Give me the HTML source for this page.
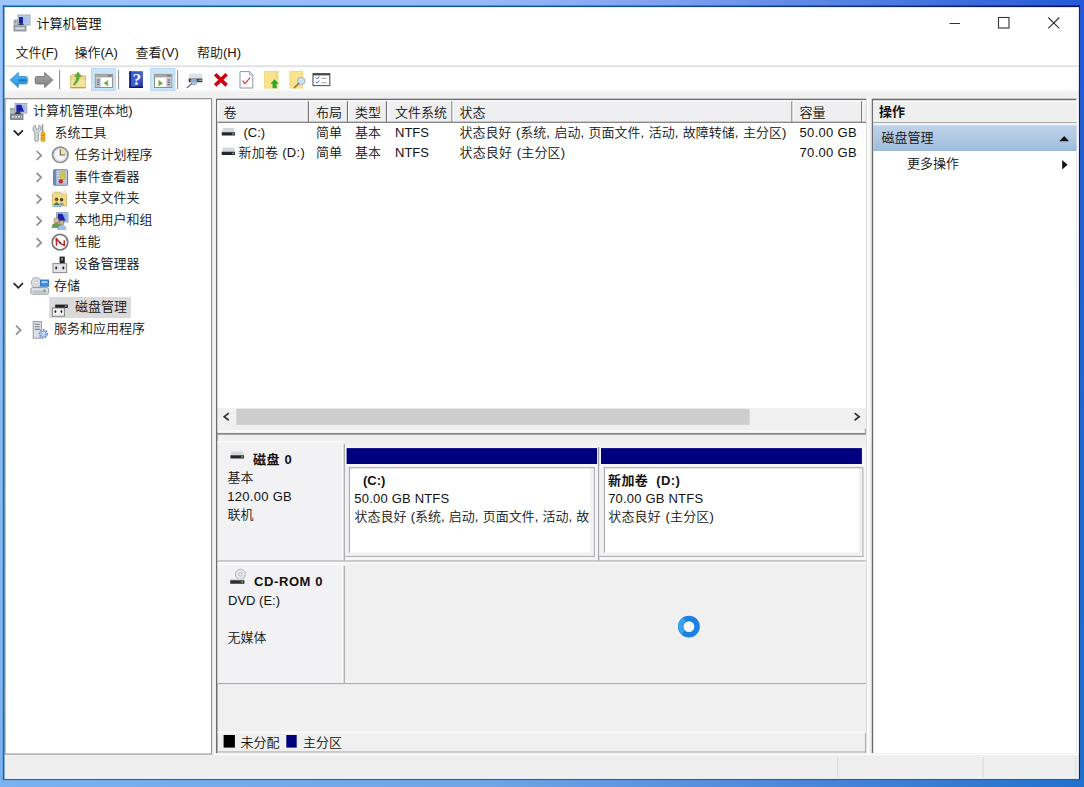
<!DOCTYPE html>
<html lang="zh-CN">
<head>
<meta charset="utf-8">
<title>计算机管理</title>
<style>
html,body{margin:0;padding:0;}
body{width:1084px;height:787px;overflow:hidden;position:relative;
 font-family:"Liberation Sans","Noto Sans CJK SC",sans-serif;font-size:13px;color:#111;font-weight:350;
 background:linear-gradient(to right,#9cc5fd 0%,#96b9f8 45%,#7f9ff0 62%,#4f7fe2 80%,#2459d5 100%);}
.abs{position:absolute;}
#deskb{left:0;top:779px;width:1084px;height:8px;background:linear-gradient(to right,#7ab1ef 0%,#6fa4e6 45%,#4f88da 72%,#2171cd 100%);}
#deskl{left:0;top:0;width:4px;height:787px;background:linear-gradient(to bottom,#9cc5fd,#7ab1ef);}
#deskr{left:1079px;top:0;width:5px;height:787px;background:linear-gradient(to bottom,#2459d5,#1f6fcc);}
#win{left:4px;top:6px;width:1075px;height:773px;background:#fff;}
#page{left:0;top:0;width:1084px;height:787px;}
.t,.tr{position:absolute;white-space:nowrap;line-height:18px;height:18px;}
.b{font-weight:bold;}
.r1{top:124px}.r2{top:143.5px}
.h{top:103.5px}
</style>
</head>
<body>
<div id="deskl" class="abs"></div>
<div id="deskr" class="abs"></div>
<div id="deskb" class="abs"></div>
<div id="win" class="abs"></div>
<svg class="abs" style="left:0;top:0" width="1084" height="787" viewBox="0 0 1084 787" shape-rendering="geometricPrecision">
<defs><linearGradient id="tb" x1="0" y1="0" x2="1" y2="0"><stop offset="0" stop-color="#1662a8"/><stop offset=".6" stop-color="#12509f"/><stop offset="1" stop-color="#06087c"/></linearGradient><linearGradient id="bb" x1="0" y1="0" x2="1" y2="0"><stop offset="0" stop-color="#1a70ad"/><stop offset="1" stop-color="#1a5fb0"/></linearGradient><linearGradient id="band" x1="0" y1="0" x2="0" y2="1"><stop offset="0" stop-color="#bfd2e9"/><stop offset=".45" stop-color="#b1c9e4"/><stop offset="1" stop-color="#9dbbdc"/></linearGradient></defs>
<rect x="4.5" y="65.6" width="1074.5" height="1" fill="#cdcdcd"/>
<rect x="4.5" y="90.2" width="1074.5" height="688.8" fill="#f0f0f0"/>
<rect x="4.5" y="90.2" width="1074.5" height="1.8" fill="#f6f6f6"/>
<rect x="4.5" y="98.1" width="207.6" height="656.5" fill="#939393"/>
<rect x="5.6" y="99.3" width="205.4" height="654.2" fill="#ffffff"/>
<rect x="49.2" y="296.9" width="81.7" height="21.2" fill="#dadada"/>
<rect x="216" y="98.7" width="650.3" height="654.5" fill="#6c6c6c"/>
<rect x="217.5" y="100.4" width="648.8" height="652.8" fill="#f0f0f0"/>
<rect x="866.8" y="99" width="2.5" height="656" fill="#fcfcfc"/>
<rect x="217.5" y="100.4" width="648.5" height="307.9" fill="#ffffff"/>
<rect x="217.5" y="100.4" width="648.5" height="22.4" fill="#efeff1"/>
<rect x="217.5" y="100.4" width="648.5" height="1.2" fill="#fcfcfc"/>
<rect x="217.5" y="100.4" width="1.1" height="21.3" fill="#fcfcfc"/>
<rect x="307.9" y="101.2" width="1.1" height="20.6" fill="#707070"/>
<rect x="309" y="101.6" width="1.3" height="20" fill="#fcfcfc"/>
<rect x="346.9" y="101.2" width="1.1" height="20.6" fill="#707070"/>
<rect x="348" y="101.6" width="1.3" height="20" fill="#fcfcfc"/>
<rect x="385.9" y="101.2" width="1.1" height="20.6" fill="#707070"/>
<rect x="387" y="101.6" width="1.3" height="20" fill="#fcfcfc"/>
<rect x="451.4" y="101.2" width="1.1" height="20.6" fill="#707070"/>
<rect x="452.5" y="101.6" width="1.3" height="20" fill="#fcfcfc"/>
<rect x="791.4" y="101.2" width="1.1" height="20.6" fill="#707070"/>
<rect x="792.5" y="101.6" width="1.3" height="20" fill="#fcfcfc"/>
<rect x="861.1" y="101.2" width="1.1" height="20.6" fill="#707070"/>
<rect x="862.2" y="101.6" width="1.3" height="20" fill="#fcfcfc"/>
<rect x="217.5" y="121.7" width="648.5" height="1.1" fill="#6f6f6f"/>
<rect x="217.5" y="408.3" width="648.5" height="21.7" fill="#f0f0f0"/>
<rect x="236.3" y="408.8" width="513.3" height="16" fill="#cdcdcd"/>
<path d="M228.8 413.2 L224.2 416.8 L228.8 420.3" fill="none" stroke="#333" stroke-width="1.7"/>
<path d="M854.6 413.2 L859.2 416.8 L854.6 420.3" fill="none" stroke="#333" stroke-width="1.7"/>
<rect x="217.5" y="430.3" width="648.1" height="1.5" fill="#fbfbfb"/>
<rect x="217.5" y="433" width="648.3" height="1.7" fill="#858585"/>
<rect x="864.8" y="428.5" width="1" height="5.5" fill="#9c9c9c"/>
<rect x="217.5" y="441.3" width="127.3" height="119.7" fill="#f2f2f5"/>
<rect x="217.5" y="441.3" width="125.7" height="1.2" fill="#fcfcfc"/>
<rect x="341.9" y="442.3" width="1.5" height="117.7" fill="#fafafa"/>
<rect x="343.7" y="443.8" width="1.1" height="117.2" fill="#a0a0a0"/>
<rect x="345.3" y="446.3" width="520.7" height="114.2" fill="#f6f6f9"/>
<rect x="598" y="447" width="1.3" height="113.5" fill="#a2a2a8"/>
<rect x="346.6" y="448.1" width="250.5" height="15.9" fill="#00007f"/>
<rect x="601" y="448.1" width="260.9" height="15.9" fill="#00007f"/>
<rect x="345.3" y="466" width="249.6" height="90.9" fill="#f1f1f3"/>
<rect x="593.9" y="467.2" width="1" height="89.7" fill="#ababab"/>
<rect x="345.3" y="555.9" width="249.6" height="1" fill="#ababab"/>
<rect x="350" y="468.2" width="240.3" height="84.4" fill="#ffffff"/>
<rect x="348.9" y="467.2" width="1.1" height="85.4" fill="#ababab"/>
<rect x="348.9" y="467.2" width="245" height="1.1" fill="#ababab"/>
<rect x="599.3" y="466" width="264.1" height="90.9" fill="#f1f1f3"/>
<rect x="862.4" y="467.2" width="1" height="89.7" fill="#ababab"/>
<rect x="599.3" y="555.9" width="264.1" height="1" fill="#ababab"/>
<rect x="605" y="468.2" width="253.7" height="84.4" fill="#ffffff"/>
<rect x="603.9" y="467.2" width="1.1" height="85.4" fill="#ababab"/>
<rect x="603.9" y="467.2" width="258.5" height="1.1" fill="#ababab"/>
<rect x="217.5" y="560.4" width="648.3" height="1.1" fill="#ababab"/>
<rect x="217.5" y="562.3" width="648.3" height="1.2" fill="#fbfbfb"/>
<rect x="217.5" y="563.5" width="127.3" height="120" fill="#f2f2f5"/>
<rect x="217.5" y="563.5" width="125.7" height="1.2" fill="#fcfcfc"/>
<rect x="341.9" y="564.5" width="1.5" height="118" fill="#fafafa"/>
<rect x="343.7" y="566" width="1.1" height="117.5" fill="#a0a0a0"/>
<rect x="217.5" y="683" width="648.3" height="1.1" fill="#ababab"/>
<rect x="217.5" y="731.6" width="647.9" height="1.4" fill="#fcfcfc"/>
<rect x="217.5" y="751.4" width="648.4" height="1.1" fill="#b0b0b0"/>
<rect x="864.9" y="733" width="1" height="19.5" fill="#b0b0b0"/>
<rect x="223.6" y="735" width="11.3" height="12.6" fill="#000000"/>
<rect x="286.3" y="735" width="10.4" height="12.6" fill="#00007f"/>
<rect x="871.8" y="98.7" width="204.7" height="654.5" fill="#6c6c6c"/>
<rect x="873.2" y="100.6" width="203.3" height="652.6" fill="#ffffff"/>
<rect x="1076.5" y="98.7" width="2.5" height="656.3" fill="#fbfeff"/>
<rect x="873.2" y="100.6" width="203.3" height="21.5" fill="#f0eff0"/>
<rect x="873.2" y="100.6" width="203.3" height="1.3" fill="#fdfdfd"/>
<rect x="873.2" y="122.1" width="203.3" height="0.9" fill="#a0a0a0"/>
<rect x="873.2" y="123" width="203.3" height="2.2" fill="#eef3fa"/>
<rect x="873.2" y="125.2" width="203.4" height="25.8" fill="url(#band)"/>
<path d="M1059.4 141.2 L1064.2 136 L1069 141.2 Z" fill="#111"/>
<path d="M1062.2 160 L1067.6 164.8 L1062.2 169.6 Z" fill="#111"/>
<rect x="214" y="753.4" width="865" height="1.8" fill="#fdfdfd"/>
<rect x="4.5" y="755.2" width="1074.5" height="22.4" fill="#f0eff0"/>
<rect x="4.5" y="777.6" width="1074.5" height="1.3" fill="#f8f8f9"/>
<rect x="837.2" y="757" width="1.1" height="20" fill="#d9d9d9"/>
<rect x="982.5" y="757" width="1.1" height="20" fill="#d9d9d9"/>
<rect x="1075" y="757" width="1.3" height="20" fill="#e2e2e6"/>
<rect x="2.8" y="5.5" width="1.7" height="774.3" fill="#1467a9"/>
<rect x="2.8" y="5.5" width="1077" height="1.6" fill="url(#tb)"/>
<rect x="1078.9" y="5.5" width="1" height="774.3" fill="#081a80"/>
<rect x="2.8" y="778.9" width="1077" height="1.2" fill="url(#bb)"/>
</svg>
<div id="page" class="abs">
<!-- title bar -->
<svg class="abs" style="left:13px;top:14px" width="18" height="18" viewBox="0 0 18 18">
 <rect x="5" y="1" width="12" height="10" fill="#c9d3df" stroke="#9aa7b6" stroke-width="1"/>
 <rect x="6.5" y="2.5" width="9" height="7" fill="#a9c4f2"/>
 <rect x="6" y="3" width="4" height="6.5" fill="#1a22b0"/>
 <path d="M5 11 L9 8 L11 11 Z" fill="#2c3a55"/>
 <rect x="1" y="6" width="4" height="7" fill="#b7bcc2" stroke="#8e949b" stroke-width=".6"/>
 <rect x="1.8" y="7" width="1.2" height="1.2" fill="#3cb043"/>
 <rect x="1" y="12" width="12" height="5" fill="#a8adb3" stroke="#7f858c" stroke-width=".8"/>
 <rect x="2.5" y="13.6" width="9" height="1.6" fill="#e3e5e8"/>
</svg>
<div class="t" style="left:36.4px;top:15px;font-size:13px;color:#000">计算机管理</div>
<svg class="abs" style="left:940px;top:8px" width="136" height="30" viewBox="0 0 136 30">
 <path d="M9.5 15.5 H20" stroke="#333" stroke-width="1" fill="none"/>
 <rect x="58.5" y="9.5" width="10.5" height="10.5" stroke="#333" stroke-width="1.1" fill="none"/>
 <path d="M108.3 9.5 L119.3 20.3 M119.3 9.5 L108.3 20.3" stroke="#333" stroke-width="1.1" fill="none"/>
</svg>
<!-- menu -->
<div class="t" style="left:15.5px;top:44px">文件(F)</div>
<div class="t" style="left:74.5px;top:44px">操作(A)</div>
<div class="t" style="left:135.5px;top:44px">查看(V)</div>
<div class="t" style="left:197px;top:44px">帮助(H)</div>
<!-- toolbar icons -->
<svg class="abs" style="left:0;top:64px" width="360" height="30" viewBox="0 64 360 30">
 <defs>
  <linearGradient id="gb" x1="0" y1="0" x2="0" y2="1"><stop offset="0" stop-color="#58b8f4"/><stop offset="1" stop-color="#2a8fdc"/></linearGradient>
  <linearGradient id="gg" x1="0" y1="0" x2="0" y2="1"><stop offset="0" stop-color="#a9a9a9"/><stop offset="1" stop-color="#7f7f7f"/></linearGradient>
  <linearGradient id="gh" x1="0" y1="0" x2="1" y2="1"><stop offset="0" stop-color="#2d56c8"/><stop offset=".6" stop-color="#3f62cc"/><stop offset="1" stop-color="#13208c"/></linearGradient>
 </defs>
 <!-- back -->
 <path d="M10.2 80 L18.3 72.5 L18.3 76.6 L25.5 76.6 Q27.4 76.6 27.4 78.5 L27.4 82 Q27.4 83.9 25.5 83.9 L18.3 83.9 L18.3 87.6 Z" fill="url(#gb)" stroke="#3b8fd6" stroke-width=".9" stroke-linejoin="round"/>
 <path d="M19.5 80.3 h6" stroke="#1977c8" stroke-width="2.2" stroke-linecap="round"/>
 <!-- forward -->
 <path d="M52.8 80 L44.7 72.5 L44.7 76.6 L37 76.6 Q35.2 76.6 35.2 78.5 L35.2 82 Q35.2 83.9 37 83.9 L44.7 83.9 L44.7 87.6 Z" fill="url(#gg)" stroke="#6f6f6f" stroke-width=".9" stroke-linejoin="round"/>
 <path d="M59.6 70 V89 M118.6 70 V89 M177.6 70 V89" stroke="#8a8a8a" stroke-width="1"/>
 <!-- folder up -->
 <path d="M70.6 76 L73 74.6 L78 74.6 L79 76 L85.6 76 L85.6 88 L70.6 88 Z" fill="#efd98a" stroke="#c9ad55" stroke-width=".8"/>
 <path d="M70.8 80 H85.4 V87.8 H70.8 Z" fill="#f3e2a0"/>
 <path d="M70.6 87.6 H85.6" stroke="#b99a45" stroke-width="1"/>
 <path d="M73.2 84.5 C75.5 82 76.5 79 76.8 76.3 L74.6 76.6 L78 72 L81.6 76.5 L79.6 76.3 C79 80 77 83.2 74.6 85 Z" fill="#5faf3a" stroke="#4f9a30" stroke-width=".5"/>
 <!-- toggle 1 -->
 <rect x="91.5" y="68.3" width="24.2" height="22.2" fill="#cce4f7" stroke="#b5d7f3" stroke-width="1"/>
 <g>
  <rect x="95.3" y="74.4" width="17.3" height="13.1" fill="#fdfdfd" stroke="#8d8d8d" stroke-width="1"/>
  <rect x="95.3" y="74.4" width="17.3" height="3" fill="#a6a6a6"/>
  <rect x="108" y="75.2" width="3.6" height="1.2" fill="#6e6e6e"/>
  <rect x="95.8" y="77.6" width="5" height="9.5" fill="#c4c4c4"/>
  <path d="M97 80 h2.4 M97 82.3 h2.4 M97 84.6 h2.4" stroke="#4d5f86" stroke-width="1"/>
  <path d="M107.8 80.4 L107.8 86 L104 83.2 Z" fill="#5aa63a" stroke="#7fbf62" stroke-width=".6"/>
 </g>
 <!-- help -->
 <rect x="129.3" y="71.2" width="13.6" height="16.8" fill="url(#gh)"/>
 <rect x="129.3" y="71.2" width="1.6" height="16.8" fill="#0d1a7a"/>
 <rect x="129.3" y="86.6" width="13.6" height="1.4" fill="#0b1370"/>
 <text x="136.9" y="85.4" font-family="Liberation Serif,serif" font-weight="bold" font-size="17.5" text-anchor="middle" fill="#eef2ff">?</text>
 <!-- toggle 2 -->
 <rect x="150.7" y="68.3" width="24.2" height="22.2" fill="#cce4f7" stroke="#b5d7f3" stroke-width="1"/>
 <g>
  <rect x="154.5" y="74.4" width="17.3" height="13.1" fill="#fdfdfd" stroke="#8d8d8d" stroke-width="1"/>
  <rect x="154.5" y="74.4" width="17.3" height="3" fill="#a6a6a6"/>
  <rect x="167.2" y="75.2" width="3.6" height="1.2" fill="#6e6e6e"/>
  <rect x="166.3" y="77.6" width="5" height="9.5" fill="#c4c4c4"/>
  <path d="M167.6 80 h2.4 M167.6 82.3 h2.4 M167.6 84.6 h2.4" stroke="#4d5f86" stroke-width="1"/>
  <path d="M158.8 80.4 L158.8 86 L162.6 83.2 Z" fill="#5aa63a" stroke="#7fbf62" stroke-width=".6"/>
 </g>
 <!-- connect -->
 <path d="M190 74.2 H201 L202.3 78.6 H188.7 Z" fill="#dfe3e8" stroke="#c3c8cf" stroke-width=".5"/>
 <rect x="188.7" y="78.6" width="13.6" height="3.6" fill="#33373e"/>
 <rect x="198.6" y="79.6" width="1.2" height="1.4" fill="#7be07a"/>
 <rect x="200.3" y="79.6" width="1.2" height="1.4" fill="#e8e8e8"/>
 <circle cx="193.8" cy="81.6" r="3.3" fill="#9fc0e6" fill-opacity=".85" stroke="#8b97a8" stroke-width=".8"/>
 <path d="M191.4 84 L187.2 87.6" stroke="#7d7d84" stroke-width="1.4" stroke-linecap="round"/>
 <!-- red X -->
 <path d="M215.2 74.2 L226.6 85.4 M226.6 74.2 L215.2 85.4" stroke="#d2000f" stroke-width="3.6" stroke-linecap="butt"/>
 <!-- doc check -->
 <path d="M240 71.6 H249.4 L252.8 75 V88 H240 Z" fill="#fff" stroke="#8f95a3" stroke-width="1" stroke-linejoin="round"/>
 <path d="M249.4 71.6 V75 H252.8" fill="none" stroke="#8f95a3" stroke-width=".8"/>
 <path d="M242.6 80.6 L244.8 83.6 L250.2 77.6" fill="none" stroke="#c4475a" stroke-width="1.3"/>
 <!-- yellow doc + up arrow -->
 <rect x="264.6" y="71.3" width="13.4" height="16.8" fill="#fbe38e" stroke="#f3d46c" stroke-width=".8"/>
 <path d="M276.6 72 V79" stroke="#d9b960" stroke-width=".8" stroke-dasharray="1.2 1.2"/>
 <path d="M274.6 79.4 L278.4 83.4 L276.4 83.4 L276.4 88 L272.8 88 L272.8 83.4 L270.8 83.4 Z" fill="#2fa52a" stroke="#3db03a" stroke-width=".5"/>
 <!-- yellow doc + magnifier -->
 <rect x="289.9" y="71.3" width="12.6" height="16.8" fill="#fbe38e" stroke="#f3d46c" stroke-width=".8"/>
 <circle cx="301.2" cy="81" r="3.5" fill="#cfe3f7" stroke="#a9b4c8" stroke-width="1.2"/>
 <path d="M298.6 83.6 L294.4 87.6" stroke="#8c7b4a" stroke-width="1.5" stroke-linecap="round"/>
 <!-- checklist -->
 <rect x="313" y="73.6" width="16.8" height="12" fill="#fff" stroke="#555" stroke-width="1.1"/>
 <rect x="313" y="73.6" width="16.8" height="1.8" fill="#4a4a4a"/>
 <path d="M316 77.6 l1.2 1.4 l2.2 -2.6 M316 81.8 l1.2 1.4 l2.2 -2.6" fill="none" stroke="#3a6fd0" stroke-width="1"/>
 <path d="M321.4 78.4 h5.4 M321.4 82.6 h5.4" stroke="#b0b4bb" stroke-width="1.2"/>
</svg>
<!-- list header text -->
<div class="t h" style="left:223.5px">卷</div>
<div class="t h" style="left:316px">布局</div>
<div class="t h" style="left:355px">类型</div>
<div class="t h" style="left:395px">文件系统</div>
<div class="t h" style="left:459.5px">状态</div>
<div class="t h" style="left:799.5px">容量</div>
<!-- list rows -->
<svg class="abs" style="left:220px;top:126px" width="18" height="34" viewBox="220 126 18 34">
 <g id="drv"><path d="M223 128 H233.8 L235 132.4 H221.7 Z" fill="#d5d8dc"/><rect x="221.7" y="132.2" width="13.3" height="3.4" rx=".5" fill="#26282c"/><rect x="232.4" y="133.2" width="1.4" height="1.4" fill="#8fe08e"/></g>
 <use href="#drv" y="19.5"/>
</svg>
<div class="t r1" style="left:243.5px">(C:)</div>
<div class="t r1" style="left:316px">简单</div>
<div class="t r1" style="left:355px">基本</div>
<div class="t r1" style="left:395px">NTFS</div>
<div class="t r1" style="left:459.5px;word-spacing:.9px">状态良好 (系统, 启动, 页面文件, 活动, 故障转储, 主分区)</div>
<div class="t r1" style="left:799.6px;letter-spacing:.3px">50.00 GB</div>
<div class="t r2" style="left:238.4px;letter-spacing:.3px">新加卷 (D:)</div>
<div class="t r2" style="left:316px">简单</div>
<div class="t r2" style="left:355px">基本</div>
<div class="t r2" style="left:395px">NTFS</div>
<div class="t r2" style="left:459.5px;word-spacing:.9px;letter-spacing:.15px">状态良好 (主分区)</div>
<div class="t r2" style="left:799.6px;letter-spacing:.3px">70.00 GB</div>
<!-- disk 0 -->
<svg class="abs" style="left:228px;top:448px" width="20" height="14" viewBox="228 448 20 14">
 <path d="M231.6 451.4 H242.8 L244 455.4 H230.4 Z" fill="#d5d8dc"/><rect x="230.4" y="455.2" width="13.6" height="3.4" rx=".5" fill="#26282c"/><rect x="241.4" y="456.2" width="1.4" height="1.4" fill="#8fe08e"/>
</svg>
<div class="t b" style="left:253px;top:450.5px;letter-spacing:.6px">磁盘 0</div>
<div class="t" style="left:227.5px;top:469px">基本</div>
<div class="t" style="left:227.2px;top:487.5px;letter-spacing:.3px">120.00 GB</div>
<div class="t" style="left:227.5px;top:506px">联机</div>
<div class="t b" style="left:363px;top:471.5px">(C:)</div>
<div class="t" style="left:354.3px;top:489.5px;letter-spacing:.2px">50.00 GB NTFS</div>
<div class="t" style="left:354.5px;top:508px;width:235.6px;overflow:hidden;word-spacing:.6px">状态良好 (系统, 启动, 页面文件, 活动, 故障转储, 主分区)</div>
<div class="t b" style="left:608px;top:471.5px;letter-spacing:.4px">新加卷&nbsp; (D:)</div>
<div class="t" style="left:608.2px;top:489.5px;letter-spacing:.2px">70.00 GB NTFS</div>
<div class="t" style="left:608.3px;top:508px;word-spacing:.9px;letter-spacing:.15px">状态良好 (主分区)</div>
<!-- CD-ROM -->
<svg class="abs" style="left:228px;top:566px" width="20" height="20" viewBox="228 566 20 20">
 <circle cx="240.4" cy="574.4" r="5" fill="#e9eaec" stroke="#a9acb2" stroke-width=".9"/>
 <circle cx="240.4" cy="574.4" r="1.7" fill="#fff" stroke="#9a9da3" stroke-width=".8"/>
 <rect x="230.2" y="578.6" width="14.2" height="2" fill="#d9dce1"/>
 <rect x="230.2" y="580.2" width="14.2" height="3.6" rx=".6" fill="#2b2d31"/>
 <rect x="241.4" y="581.3" width="1.4" height="1.3" fill="#9be59a"/>
</svg>
<div class="t b" style="left:254px;top:572.5px;letter-spacing:.6px">CD-ROM 0</div>
<div class="t" style="left:228px;top:591.5px">DVD (E:)</div>
<div class="t" style="left:227.5px;top:628.5px">无媒体</div>
<!-- busy cursor -->
<svg class="abs" style="left:674px;top:612px" width="30" height="30" viewBox="674 612 30 30">
 <circle cx="688.9" cy="626.6" r="5.6" fill="#f9fafd"/>
 <circle cx="688.9" cy="626.6" r="8.2" fill="none" stroke="#1e80e2" stroke-width="5.5"/>
 <circle cx="688.9" cy="626.6" r="8.4" fill="none" stroke="#36a6ea" stroke-width="4.6" stroke-dasharray="15 40" transform="rotate(135 688.9 626.6)"/>
</svg>
<!-- legend -->
<div class="t" style="left:240.5px;top:733.5px">未分配</div>
<div class="t" style="left:303px;top:733.5px">主分区</div>
<!-- action pane -->
<div class="t b" style="left:879px;top:103px">操作</div>
<div class="t" style="left:881.5px;top:129px">磁盘管理</div>
<div class="t" style="left:907px;top:155px">更多操作</div>
<!-- tree -->
<div class="tr" style="left:33px;top:102px">计算机管理(本地)</div>
<div class="tr" style="left:54.5px;top:124px">系统工具</div>
<div class="tr" style="left:74.5px;top:145.8px">任务计划程序</div>
<div class="tr" style="left:74.5px;top:167.6px">事件查看器</div>
<div class="tr" style="left:74.5px;top:189.4px">共享文件夹</div>
<div class="tr" style="left:74.5px;top:211.2px">本地用户和组</div>
<div class="tr" style="left:74.5px;top:233px">性能</div>
<div class="tr" style="left:74.5px;top:254.8px">设备管理器</div>
<div class="tr" style="left:54px;top:276.6px">存储</div>
<div class="tr" style="left:75px;top:298.4px">磁盘管理</div>
<div class="tr" style="left:54px;top:320.2px">服务和应用程序</div>
<svg class="abs" style="left:5px;top:99px" width="75" height="245" viewBox="5 99 75 245">
 <!-- chevrons -->
 <g fill="none" stroke="#262626" stroke-width="1.8">
  <path d="M13.7 130.4 L18.3 135 L22.9 130.4"/>
  <path d="M13.7 283.2 L18.3 287.8 L22.9 283.2"/>
 </g>
 <g fill="none" stroke="#8f8f8f" stroke-width="1.7">
  <path d="M36.6 151 L41.2 155.5 L36.6 160"/>
  <path d="M36.6 172.8 L41.2 177.3 L36.6 181.8"/>
  <path d="M36.6 194.6 L41.2 199.1 L36.6 203.6"/>
  <path d="M36.6 216.4 L41.2 220.9 L36.6 225.4"/>
  <path d="M36.6 238.2 L41.2 242.7 L36.6 247.2"/>
  <path d="M16 325.7 L20.6 330.2 L16 334.7"/>
 </g>
 <!-- root icon: computer management -->
 <g>
  <rect x="15" y="103.5" width="11.8" height="9.6" fill="#c5cfdc" stroke="#98a5b5" stroke-width=".9"/>
  <rect x="16.4" y="104.8" width="9" height="7" fill="#a3b9ee"/>
  <path d="M16.4 104.8 H21.4 L24 111.8 H16.4 Z" fill="#1a22b0"/>
  <path d="M14 114 L18.5 110.2 L21.5 114 Z" fill="#2c3a55"/>
  <rect x="10.6" y="108.2" width="4" height="6.6" fill="#b7bcc2" stroke="#8e949b" stroke-width=".6"/>
  <rect x="11.4" y="109.2" width="1.2" height="1.2" fill="#3cb043"/>
  <rect x="10.6" y="114.2" width="12.4" height="5.2" fill="#8e949c" stroke="#6d737b" stroke-width=".8"/>
  <path d="M12 116.8 h9.8" stroke="#dfe2e6" stroke-width="1.4" stroke-dasharray="2 1"/>
 </g>
 <!-- system tools: wrench + screwdriver -->
 <path d="M33 128.4 C33 126.8 34 125.8 35.4 125.2 L35.8 128.8 L38 129.4 L39 125.2 C40.4 125.8 41 127.2 40.8 128.8 C40.6 130.8 39.6 131.8 38.4 132.4 L38.4 140 Q38.4 141.4 36.6 141.4 Q34.8 141.4 34.8 140 L34.8 132.4 C33.6 131.8 33 130.4 33 128.4 Z" fill="#d3d6da" stroke="#8c9097" stroke-width=".8"/>
 <path d="M42 124.6 H42.9 V132.2 H42 Z" fill="#9a9da3" stroke="#7d8087" stroke-width=".5"/>
 <rect x="41" y="132" width="4" height="9.6" rx="1.4" fill="#eab324" stroke="#c48c12" stroke-width=".6"/>
 <path d="M41.2 135.4 h3.6 M41.2 138.2 h3.6" stroke="#b8860b" stroke-width=".8"/>
 <!-- task scheduler clock -->
 <circle cx="60.3" cy="154.8" r="7.7" fill="#f2f4f8" stroke="#8d8d8d" stroke-width="1.7"/>
 <path d="M60.3 154.8 V148.4 A6.4 6.4 0 0 1 66.7 154.8 Z" fill="#efe2a6"/>
 <circle cx="60.3" cy="154.8" r="6.2" fill="none" stroke="#d2d5db" stroke-width=".8"/>
 <path d="M60.3 149.6 V155 H65" fill="none" stroke="#66614f" stroke-width="1.1"/>
 <!-- event viewer -->
 <rect x="53.6" y="169.8" width="14" height="15.4" rx=".8" fill="#cfdcee" stroke="#5875a6" stroke-width="1"/>
 <rect x="53.6" y="169.8" width="2.8" height="15.4" fill="#6d8ab8"/>
 <path d="M57 172.2 h10 M57 174.6 h10 M57 177 h10 M57 179.4 h10 M57 181.8 h10 M57 183.8 h10" stroke="#8fa6cc" stroke-width=".8"/>
 <rect x="60.2" y="171.8" width="4.6" height="7.4" rx="1" fill="#e6c64a" stroke="#b79a2a" stroke-width=".5"/>
 <rect x="61.9" y="173" width="1.2" height="3.4" fill="#9ccf4a"/>
 <circle cx="60.8" cy="181.4" r="1.9" fill="#d8232a" stroke="#a81f1a" stroke-width=".4"/>
 <!-- shared folders -->
 <path d="M52.4 194 L54.4 192.2 L60 192.2 L61 194 L66.6 194 L66.6 206 L52.4 206 Z" fill="#f0da8c" stroke="#cdb25c" stroke-width=".8"/>
 <path d="M59.6 192.6 L65.6 191.6 L65.6 194" fill="#fbfbfb" stroke="#c4c4c4" stroke-width=".6"/>
 <circle cx="56.6" cy="199.4" r="1.8" fill="#6a5638"/><path d="M53.6 205 Q56.6 199.6 59.6 205 Z" fill="#5a6a4a"/>
 <circle cx="61.6" cy="199.8" r="1.7" fill="#4e4230"/><path d="M58.8 205.2 Q61.6 200.4 64.4 205.2 Z" fill="#7f95b8"/>
 <path d="M53 206.4 h8" stroke="#7fb2e0" stroke-width="1.2"/>
 <!-- local users and groups -->
 <rect x="56.6" y="212.6" width="11.4" height="9.4" fill="#c9d3df" stroke="#8d9aad" stroke-width=".9"/>
 <rect x="57.8" y="213.8" width="9" height="7" fill="#86a8e8"/>
 <path d="M57.8 213.8 H62.4 L65.4 220.8 H57.8 Z" fill="#1a22b0"/>
 <circle cx="56.4" cy="220.4" r="2.5" fill="#dcc3a0" stroke="#8c6f4c" stroke-width=".6"/>
 <path d="M52 227.6 Q52.2 223 56.4 223.2 Q60.6 223 60.8 227.6 Z" fill="#6a9a4c" stroke="#456c34" stroke-width=".5"/>
 <circle cx="61.6" cy="222.8" r="2.3" fill="#cdb38c" stroke="#7a6040" stroke-width=".6"/>
 <path d="M57.6 229.4 Q57.8 225 61.6 225.2 Q65.6 225 65.8 229.4 Z" fill="#9cc4ea" stroke="#5f8cc0" stroke-width=".5"/>
 <!-- performance -->
 <circle cx="60" cy="242.2" r="7.8" fill="#fdfdfd" stroke="#777" stroke-width="1.7"/>
 <path d="M56.6 245.6 L56.2 238.2 L60.6 243.6 L64.4 245.4 L64.2 240.4" fill="none" stroke="#c81e28" stroke-width="1.5" stroke-linejoin="round"/>
 <circle cx="60.2" cy="242.6" r=".9" fill="#333"/>
 <!-- device manager -->
 <rect x="59.6" y="256.6" width="5.2" height="7.2" fill="#1f2023"/>
 <rect x="61.2" y="257.8" width="1.8" height="2.6" fill="#8d929a"/>
 <rect x="53" y="263.6" width="13.6" height="9" fill="#e6e6e6" stroke="#8a8a8a" stroke-width="1"/>
 <ellipse cx="56.2" cy="268" rx="1" ry="1.4" fill="#1f2023"/><ellipse cx="63.4" cy="268" rx="1" ry="1.4" fill="#1f2023"/>
 <!-- storage -->
 <circle cx="36.2" cy="282.6" r="5" fill="#d9dce0" stroke="#9a9ea6" stroke-width=".8"/>
 <circle cx="36.2" cy="282.6" r="1.6" fill="#fff" stroke="#9a9ea6" stroke-width=".5"/>
 <rect x="40.4" y="280" width="8.2" height="6.2" fill="#3f8fe0" stroke="#2a6cb6" stroke-width=".8"/>
 <rect x="41.6" y="281.2" width="5.8" height="1.8" fill="#a9d4f7"/>
 <rect x="30.8" y="287.6" width="17.8" height="6.6" rx="1.8" fill="#dfe2e6" stroke="#8c9097" stroke-width=".9"/>
 <rect x="32.4" y="290.6" width="14.4" height="2.2" rx=".8" fill="#b9bdc4"/>
 <rect x="43.6" y="289.4" width="1.6" height="2.6" fill="#45b83c"/>
 <!-- disk management -->
 <rect x="55.2" y="304.6" width="12.6" height="3.4" fill="#1f2023"/>
 <rect x="64.8" y="305.6" width="1.6" height="1.2" fill="#d6d6d6"/>
 <rect x="52.4" y="308" width="12" height="8.2" fill="#f2f2f2" stroke="#7a7a7a" stroke-width=".9"/>
 <ellipse cx="55.4" cy="311.6" rx=".9" ry="1.3" fill="#1f2023"/><ellipse cx="61.4" cy="311.6" rx=".9" ry="1.3" fill="#1f2023"/>
 <!-- services and applications -->
 <rect x="33.2" y="321.6" width="8.2" height="16.6" fill="#dcdfe4" stroke="#8c9097" stroke-width=".9"/>
 <path d="M34.8 324.2 h5 M34.8 326.8 h5 M34.8 329.4 h5" stroke="#7b8088" stroke-width="1.1"/>
 <circle cx="43.4" cy="333.8" r="3.9" fill="#cfdcf0" stroke="#6a93cf" stroke-width="1.8" stroke-dasharray="1.7 1.2"/>
 <circle cx="43.4" cy="333.8" r="2.6" fill="#dfe9f8" stroke="#6a93cf" stroke-width=".8"/>
 <circle cx="43.4" cy="333.8" r="1" fill="#fff" stroke="#6a93cf" stroke-width=".5"/>
</svg>
</div>
</body>
</html>
